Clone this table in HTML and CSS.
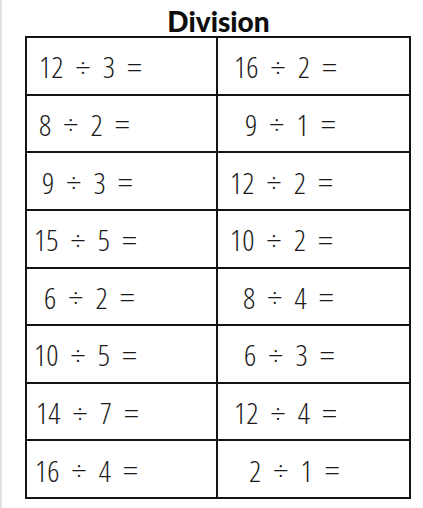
FILE: index.html
```html
<!DOCTYPE html>
<html>
<head>
<meta charset="utf-8">
<link rel="stylesheet" href="styles.css">
</head>
<body>
<div class="page">
  <h1 class="title">Division</h1>
  <div class="sheet">
    <div class="cell p14">12 <span class="op">÷</span> 3 <span class="op">=</span></div>
    <div class="cell p17">16 <span class="op">÷</span> 2 <span class="op">=</span></div>
    <div class="cell p14">8 <span class="op">÷</span> 2 <span class="op">=</span></div>
    <div class="cell p28">9 <span class="op">÷</span> 1 <span class="op">=</span></div>
    <div class="cell p16">9 <span class="op">÷</span> 3 <span class="op">=</span></div>
    <div class="cell p14">12 <span class="op">÷</span> 2 <span class="op">=</span></div>
    <div class="cell p9">15 <span class="op">÷</span> 5 <span class="op">=</span></div>
    <div class="cell p14">10 <span class="op">÷</span> 2 <span class="op">=</span></div>
    <div class="cell p18">6 <span class="op">÷</span> 2 <span class="op">=</span></div>
    <div class="cell p26">8 <span class="op">÷</span> 4 <span class="op">=</span></div>
    <div class="cell p9">10 <span class="op">÷</span> 5 <span class="op">=</span></div>
    <div class="cell p27">6 <span class="op">÷</span> 3 <span class="op">=</span></div>
    <div class="cell p11">14 <span class="op">÷</span> 7 <span class="op">=</span></div>
    <div class="cell p17">12 <span class="op">÷</span> 4 <span class="op">=</span></div>
    <div class="cell p10">16 <span class="op">÷</span> 4 <span class="op">=</span></div>
    <div class="cell p32">2 <span class="op">÷</span> 1 <span class="op">=</span></div>
  </div>
</div>
</body>
</html>
```
FILE: styles.css
```css
html, body {
  margin: 0;
  padding: 0;
  background: #fff;
}
.page {
  width: 423px;
  height: 508px;
  box-sizing: border-box;
  border-left: 2px solid #e2e2e2;
  padding-top: 6px;
}
.title {
  margin: 0;
  height: 30px;
  font-family: Lato, "DejaVu Sans", sans-serif;
  font-weight: 900;
  font-size: 28px;
  line-height: 30px;
  text-align: center;
  color: #0d0d0d;
  padding-left: 12px;
}
.sheet {
  margin-left: 23px;
  width: 386px;
  height: 463px;
  box-sizing: border-box;
  display: grid;
  grid-template-columns: 189px 1fr;
  grid-template-rows: repeat(8, 1fr);
  gap: 2px;
  padding: 2px;
  background: #141414;
}
.cell {
  background: #fff;
  display: flex;
  align-items: center;
  font-family: "Open Sans", Lato, sans-serif;
  font-weight: 300;
  font-stretch: 75%;
  font-size: 30px;
  color: #1a1a1a;
  word-spacing: 6px;
  padding-top: 2px;
  white-space: pre;
}
.op {
  font-stretch: 100%;
  font-size: 28px;
}
.p9 { padding-left: 7px; }
.p10 { padding-left: 8px; }
.p11 { padding-left: 9px; }
.p14 { padding-left: 12px; }
.p16 { padding-left: 15px; }
.p17 { padding-left: 16px; }
.p18 { padding-left: 17px; }
.p26 { padding-left: 25px; }
.p27 { padding-left: 26px; }
.p28 { padding-left: 27px; }
.p32 { padding-left: 31px; }
```
